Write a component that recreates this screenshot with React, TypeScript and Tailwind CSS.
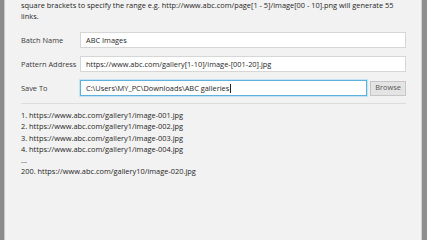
import React from 'react';

const links = [
  '1. https://www.abc.com/gallery1/image-001.jpg',
  '2. https://www.abc.com/gallery1/image-002.jpg',
  '3. https://www.abc.com/gallery1/image-003.jpg',
  '4. https://www.abc.com/gallery1/image-004.jpg',
  '...',
  '200. https://www.abc.com/gallery10/image-020.jpg',
];

const Field = ({ label, value }: { label: string; value: string }) => (
  <div className="flex items-center h-[16px]">
    <span className="w-[59px] shrink-0 text-[#3a3a3a]">{label}</span>
    <div className="flex-1 h-[16px] bg-white border border-[#d6d6d6] flex items-center px-[5px]">{value}</div>
  </div>
);

export default function App() {
  return (
    <div className="w-[427px] h-[240px] bg-[#f2f2f2] flex overflow-hidden text-[7.4px] text-[#262626] leading-[11px] font-['Open_Sans','Noto_Sans',sans-serif]">
      {/* left window frame */}
      <div className="w-[5px] shrink-0 bg-[#8c8c8c] border-r border-[#c8c8c8]" />

      <div className="flex-1 pl-[16px] pr-[15px]">
        <p className="leading-[11px]">
          square brackets to specify the range e.g. http://www.abc.com/page[1 - 5]/image[00 - 10].png will generate 55 links.
        </p>

        <div className="mt-[10px] flex flex-col gap-[8px]">
          <Field label="Batch Name" value="ABC Images" />
          <Field label="Pattern Address" value="https://www.abc.com/gallery[1-10]/image-[001-20].jpg" />
          <div className="flex items-center h-[16px]">
            <span className="w-[59px] shrink-0 text-[#3a3a3a]">Save To</span>
            <div className="flex-1 h-[16px] bg-white border border-[#5fb2de] shadow-[0_0_0_1px_#c4e3f4] flex items-center px-[5px]">
              C:\Users\MY_PC\Downloads\ABC galleries
              <span className="inline-block w-px h-[9px] bg-[#222] ml-px" />
            </div>
            <button className="ml-[3px] w-[36px] h-[15px] bg-[#e4e4e4] border border-[#c6c6c6] text-[#555] text-[7.4px] leading-none flex items-center justify-center">
              Browse
            </button>
          </div>
        </div>

        <div className="mt-[7px] border-t border-[#dcdcdc]" />

        <div className="mt-[6px] flex flex-col leading-[11.3px]">
          {links.map(l => (
            <div key={l}>{l}</div>
          ))}
        </div>
      </div>

      {/* right window frame */}
      <div className="w-[6px] shrink-0 bg-[#8f8f8f] border-l border-[#d2d2d2]" />
    </div>
  );
}
